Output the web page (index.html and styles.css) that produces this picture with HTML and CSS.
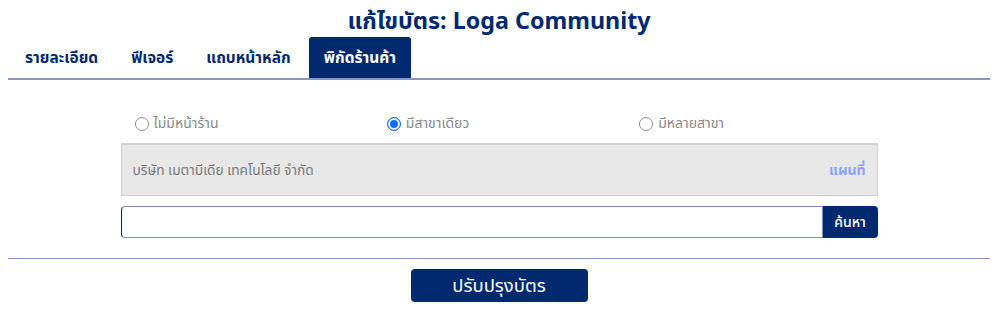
FILE: index.html
```
<!DOCTYPE html>
<html lang="th">
<head>
<meta charset="utf-8">
<link rel="stylesheet" href="styles.css">
</head>
<body>
<div class="page">
  <h1 class="title">แก้ไขบัตร: Loga Community</h1>
  <nav class="tabs">
    <a class="tab">รายละเอียด</a>
    <a class="tab">ฟีเจอร์</a>
    <a class="tab">แถบหน้าหลัก</a>
    <a class="tab active">พิกัดร้านค้า</a>
  </nav>
  <section class="panel">
    <div class="radios">
      <label class="radio"><span class="dot"></span>ไม่มีหน้าร้าน</label>
      <label class="radio"><span class="dot checked"></span>มีสาขาเดียว</label>
      <label class="radio"><span class="dot"></span>มีหลายสาขา</label>
    </div>
    <div class="addr">
      <span class="addr-text">บริษัท เมตามีเดีย เทคโนโลยี จำกัด</span>
      <a class="map">แผนที่</a>
    </div>
    <div class="search">
      <input class="search-input" type="text">
      <button class="search-btn">ค้นหา</button>
    </div>
  </section>
  <div class="footer">
    <button class="save">ปรับปรุงบัตร</button>
  </div>
</div>
</body>
</html>
```
FILE: styles.css
```
* { box-sizing: border-box; }
html, body { margin: 0; background: #fff; }
body {
  font-family: "Noto Sans", "Noto Sans Thai", "Open Sans", sans-serif;
  color: #012970;
}
.page {
  padding: 4px 10px 0 8px;
}
.title {
  margin: 0;
  text-align: center;
  font-size: 23.3px;
  line-height: 33px;
  font-weight: 700;
  color: #012970;
}
.tabs {
  display: flex;
  gap: 3px;
  height: 43px;
  padding-left: 2px;
  border-bottom: 2px solid #8797c0;
}
.tab {
  display: flex;
  align-items: center;
  padding: 0 15px;
  font-size: 15.5px;
  font-weight: 700;
  color: #012970;
  border-radius: 3px 3px 0 0;
}
.tab.active {
  background: #012970;
  color: #fff;
}
.panel {
  width: 757px;
  margin: 0 auto;
  padding: 33px 0 20px;
}
.radios {
  display: grid;
  grid-template-columns: 1fr 1fr 1fr;
  height: 20px;
  margin-bottom: 10px;
}
.radio {
  display: flex;
  align-items: center;
  gap: 5px;
  padding-left: 14px;
  font-size: 14px;
  color: #8a8a8a;
}
.dot {
  width: 14px;
  height: 14px;
  border: 1.5px solid #8a8a8a;
  border-radius: 50%;
  display: inline-block;
}
.dot.checked {
  border-color: #0d6efd;
  background: #0d6efd;
  box-shadow: inset 0 0 0 2px #fff;
}
.addr {
  display: flex;
  align-items: center;
  justify-content: space-between;
  height: 53px;
  background: #e8e8e8;
  border: 2px solid #d2d2d2;
  border-width: 2px 1px 1px 1px;
  padding: 0 11px 0 11px;
  font-size: 13.7px;
  color: #7a7a7a;
}
.map {
  font-weight: 700;
  color: #8aa2ff;
  font-size: 14px;
}
.search {
  display: flex;
  margin-top: 10px;
  height: 32px;
}
.search-input {
  flex: 1;
  border: 1px solid #7d8fbf;
  border-left-color: #012970;
  border-radius: 4px 0 0 4px;
  outline: none;
}
.search-btn {
  width: 55px;
  border: none;
  background: #012970;
  color: #fff;
  font-family: inherit;
  font-size: 14px;
  font-weight: 500;
  border-radius: 0 4px 4px 0;
}
.footer {
  border-top: 1px solid #8797c0;
  display: flex;
  justify-content: center;
  padding-top: 10px;
}
.save {
  width: 177px;
  height: 33px;
  border: none;
  border-radius: 4px;
  background: #012970;
  color: #fff;
  font-family: inherit;
  font-size: 18.5px;
}
```
